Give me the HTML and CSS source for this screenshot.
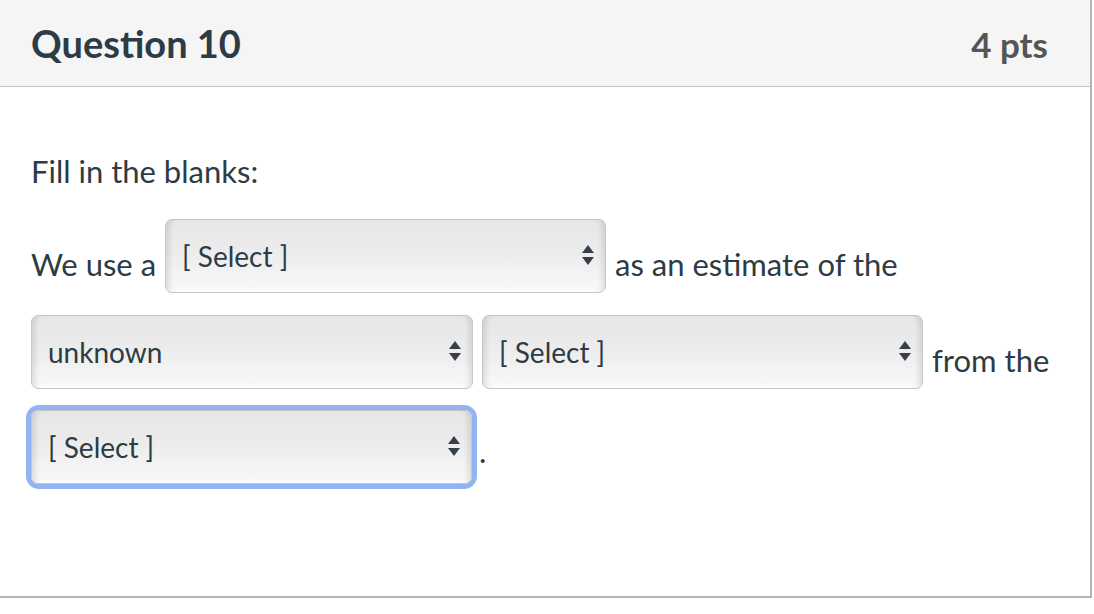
FILE: index.html
```html
<!DOCTYPE html>
<html lang="en">
<head>
<meta charset="utf-8">
<title>Question 10</title>
<link rel="stylesheet" href="styles.css">
</head>
<body>
<div class="card">
  <div class="card-header">
    <h2 class="q-title">Question 10</h2>
    <span class="q-pts">4 pts</span>
  </div>
  <div class="card-body">
    <p class="lead">Fill in the blanks:</p>
    <div class="line line-1">
      <span class="txt">We use a</span>
      <span class="sel">
        <select class="sel-input"><option>[ Select ]</option></select>
        <svg class="sel-arrow" width="12" height="20" viewBox="0 0 12 20"><path d="M6 0 L12 8 L0 8 Z M0 12 L12 12 L6 20 Z" fill="#35404a"/></svg>
      </span>
      <span class="txt">as an estimate of the</span>
    </div>
    <div class="line line-2">
      <span class="sel">
        <select class="sel-input"><option>unknown</option></select>
        <svg class="sel-arrow" width="12" height="20" viewBox="0 0 12 20"><path d="M6 0 L12 8 L0 8 Z M0 12 L12 12 L6 20 Z" fill="#35404a"/></svg>
      </span>
      <span class="sel">
        <select class="sel-input"><option>[ Select ]</option></select>
        <svg class="sel-arrow" width="12" height="20" viewBox="0 0 12 20"><path d="M6 0 L12 8 L0 8 Z M0 12 L12 12 L6 20 Z" fill="#35404a"/></svg>
      </span>
      <span class="txt">from the</span>
    </div>
    <div class="line line-3">
      <span class="sel sel-focus">
        <select class="sel-input"><option>[ Select ]</option></select>
        <svg class="sel-arrow" width="12" height="20" viewBox="0 0 12 20"><path d="M6 0 L12 8 L0 8 Z M0 12 L12 12 L6 20 Z" fill="#35404a"/></svg>
      </span>
      <span class="txt dot">.</span>
    </div>
  </div>
</div>
</body>
</html>
```
FILE: styles.css
```css
html, body {
  margin: 0;
  padding: 0;
  background: #ffffff;
}

body {
  font-family: Lato, "Noto Sans", sans-serif;
  color: #2d3b45;
}

.card {
  width: 1090px;
  height: 596px;
  border-right: 2px solid #b5b5b5;
  border-bottom: 2px solid #b5b5b5;
  background: #ffffff;
}

.card-header {
  height: 86px;
  background: #f5f5f5;
  border-bottom: 1px solid #c2c2c2;
  display: flex;
  align-items: center;
  justify-content: space-between;
  padding: 0 42px 0 31px;
}

.q-title {
  margin: 0;
  font-size: 38px;
  font-weight: 700;
  color: #2d3b45;
  line-height: 1;
}

.q-pts {
  font-size: 35px;
  font-weight: 700;
  color: #555555;
  line-height: 1;
  padding-top: 3px;
}

.card-body {
  padding: 0 31px;
}

.lead {
  margin: 0;
  padding-top: 64px;
  font-size: 31px;
  line-height: 40px;
}

.line {
  display: flex;
  align-items: flex-end;
  gap: 9px;
  font-size: 31px;
  line-height: 40px;
}

.line-1 {
  margin-top: 28px;
}

.line-2 {
  margin-top: 22px;
}

.line-3 {
  margin-top: 21px;
}

.txt {
  margin-bottom: 9px;
  white-space: nowrap;
}

.dot {
  margin-bottom: 13px;
  margin-left: -2px;
}

.sel {
  position: relative;
  display: inline-block;
  width: 441px;
  height: 74px;
  border-radius: 7px;
}

.line-2 .sel:first-child {
  width: 442px;
}

.sel-focus {
  box-shadow: 0 0 0 5px #93b3f3;
  border-radius: 8px;
}

.sel-input {
  appearance: none;
  -webkit-appearance: none;
  box-sizing: border-box;
  width: 100%;
  height: 100%;
  margin: 0;
  padding: 0 40px 0 16px;
  border: 1px solid #c6c6c6;
  border-radius: 7px;
  background: linear-gradient(to bottom, #e6e6e6 0%, #ececec 45%, #f9f9f9 100%);
  box-shadow: inset 7px 0 6px -5px rgba(0, 0, 0, 0.14), inset -7px 0 6px -5px rgba(0, 0, 0, 0.14), inset 0 -2px 2px rgba(255, 255, 255, 0.9);
  font-family: Lato, "Noto Sans", sans-serif;
  font-size: 28px;
  color: #2d3b45;
  outline: none;
}

.sel-arrow {
  position: absolute;
  right: 12px;
  top: 26px;
  pointer-events: none;
}
```
